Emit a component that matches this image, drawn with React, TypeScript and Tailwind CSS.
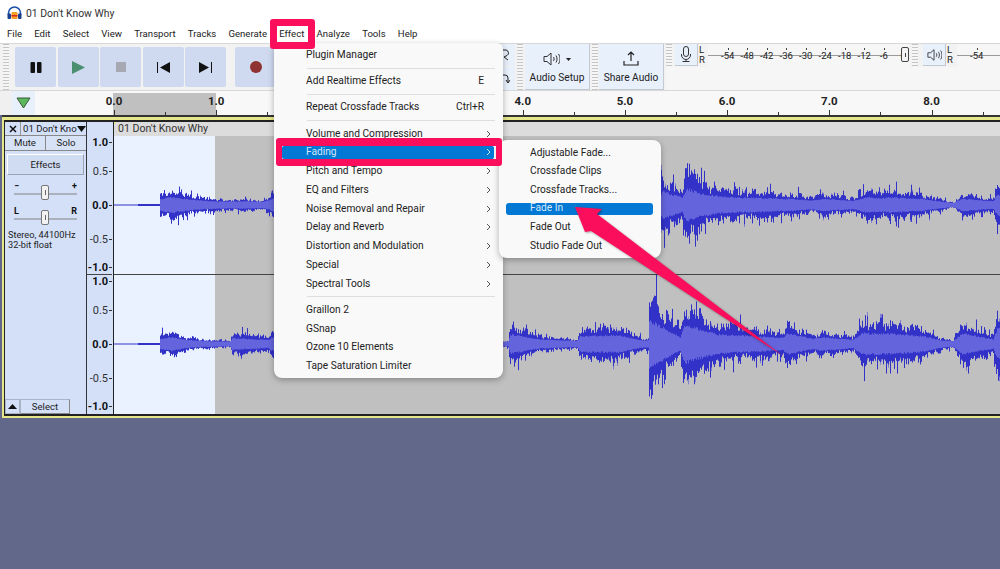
import React from "react";

const font = "font-['Roboto','Noto_Sans',sans-serif]";

type Pt = [number, number];

const topEnv: Pt[] = [[114,0],[137,0],[138,1],[159,1],[160,14],[172,20],[180,16],[195,11],[215,8],[231,7],[240,8],[262,6],[268,10],[275,18],[503,3],[510,20],[660,20],[662,36],[678,22],[682,18],[686,45],[700,30],[723,20],[760,17],[790,14],[813,10],[822,15],[853,9],[867,20],[880,16],[890,19],[923,14],[940,7],[953,3],[962,15],[975,12],[993,8],[997,28],[1000,28]];
const bottomEnv: Pt[] = [[114,0],[137,0],[138,1],[159,1],[160,12],[172,17],[185,9],[200,6],[230,4],[232,15],[245,12],[268,9],[271,15],[275,18],[503,3],[508,4],[510,25],[540,10],[577,6],[580,20],[617,22],[643,7],[648,8],[649,65],[680,16],[684,52],[717,25],[783,15],[787,27],[813,12],[822,17],[853,9],[862,28],[890,26],[923,20],[940,8],[953,5],[962,27],[975,20],[993,11],[997,40],[1000,40]];

function makeRandom(seed: number) {
	let s = seed;
	return () => {
		s = (s + 0x6d2b79f5) | 0;
		let t = Math.imul(s ^ (s >>> 15), 1 | s);
		t = (t + Math.imul(t ^ (t >>> 7), 61 | t)) ^ t;
		return ((t ^ (t >>> 14)) >>> 0) / 4294967296;
	};
}

function ampAt(env: Pt[], x: number) {
	for (let i = 1; i < env.length; i++) {
		if (x <= env[i][0]) {
			const [x0, y0] = env[i - 1];
			const [x1, y1] = env[i];
			return y0 + ((y1 - y0) * (x - x0)) / (x1 - x0);
		}
	}
	return 0;
}

function buildWave(env: Pt[], seed: number, cy: number) {
	const r = makeRandom(seed);
	let outer = "";
	let inner = "";
	let faint = "";
	let slowUp = 1;
	let slowDown = 1;
	for (let i = 0; i < 886; i += 1) {
		const x = i + 0.5;
		const a = ampAt(env, i + 114);
		if (a <= 1.5) {
			outer += `M${x} ${cy - a / 2 - 0.5}V${cy + a / 2 + 0.5}`;
			continue;
		}
		if (i % 4 === 0) {
			slowUp = 0.7 + 0.3 * r();
			slowDown = 0.7 + 0.3 * r();
		}
		const up = a * slowUp * (0.62 + 0.38 * r()) * (r() < 0.12 ? 1.45 : 1);
		const down = a * slowDown * (0.62 + 0.38 * r()) * (r() < 0.12 ? 1.45 : 1);
		outer += `M${x} ${(cy - up).toFixed(1)}V${(cy + down).toFixed(1)}`;
		if (r() < 0.06) faint += `M${x} ${(cy - up * 1.15).toFixed(1)}V${(cy + down * 1.15).toFixed(1)}`;
		const rmsUp = a * (0.3 + 0.08 * r()) + 1;
		const rmsDown = a * (0.3 + 0.08 * r()) + 1;
		inner += `M${x} ${(cy - rmsUp).toFixed(1)}V${(cy + rmsDown).toFixed(1)}`;
	}
	return { outer, inner, faint };
}

const topWave = buildWave(topEnv, 11, 69);
const bottomWave = buildWave(bottomEnv, 29, 69);

type WaveData = { outer: string; inner: string; faint: string };

function Wave({ wave }: { wave: WaveData }) {
	return (
		<svg width="886" height="139" className="absolute inset-0">
			<path d={wave.faint} stroke="#8080d0" strokeWidth="1" fill="none" />
			<path d={wave.outer} stroke="#3232c8" strokeWidth="1" fill="none" />
			<path d={wave.inner} stroke="#6464dc" strokeWidth="1" fill="none" />
		</svg>
	);
}

function Grip({ h = "h-full" }: { h?: string }) {
	return (
		<div
			className={`w-[6px] shrink-0 ${h} bg-[repeating-linear-gradient(to_bottom,#c4c4c4_0,#c4c4c4_1px,#f6f6f6_1px,#f6f6f6_3px)]`}
		/>
	);
}

function Transport({ children }: { children: React.ReactNode }) {
	return (
		<div className="w-[41px] h-[40px] bg-[#cfdaf0] rounded-[2px] flex items-center justify-center shrink-0">
			{children}
		</div>
	);
}

const menuBar = ["File", "Edit", "Select", "View", "Transport", "Tracks", "Generate", "Effect", "Analyze", "Tools", "Help"];

type MenuEntry = { label: string; shortcut?: string; sub?: boolean; active?: boolean; sep?: boolean };

const effectMenu: MenuEntry[] = [
	{ label: "Plugin Manager", sep: true },
	{ label: "Add Realtime Effects", shortcut: "E", sep: true },
	{ label: "Repeat Crossfade Tracks", shortcut: "Ctrl+R", sep: true },
	{ label: "Volume and Compression", sub: true },
	{ label: "Fading", sub: true, active: true },
	{ label: "Pitch and Tempo", sub: true },
	{ label: "EQ and Filters", sub: true },
	{ label: "Noise Removal and Repair", sub: true },
	{ label: "Delay and Reverb", sub: true },
	{ label: "Distortion and Modulation", sub: true },
	{ label: "Special", sub: true },
	{ label: "Spectral Tools", sub: true, sep: true },
	{ label: "Graillon 2" },
	{ label: "GSnap" },
	{ label: "Ozone 10 Elements" },
	{ label: "Tape Saturation Limiter" },
];

const fadingMenu = ["Adjustable Fade...", "Crossfade Clips", "Crossfade Tracks...", "Fade In", "Fade Out", "Studio Fade Out"];

function EffectMenu() {
	return (
		<div className="absolute left-[274px] top-[43px] w-[229px] h-[335px] bg-[#f9f9f9] rounded-b-lg rounded-t-md shadow-[0_2px_6px_rgba(0,0,0,0.3)] pt-[2.5px] z-10">
			{effectMenu.map((m) => (
				<React.Fragment key={m.label}>
					<div className="h-[18.75px] flex items-center relative">
						{m.active && <div className="absolute left-[8px] w-[212px] h-[13px] bg-[#0078d4] rounded-[2px]" />}
						<span className={`relative ml-[32px] text-[10.2px] leading-none ${m.active ? "text-[#d5e8f8]" : "text-[#222]"}`}>
							{m.label}
						</span>
						{m.shortcut && (
							<span className="absolute right-[19px] text-[10.2px] leading-none text-[#222]">{m.shortcut}</span>
						)}
						{m.sub && (
							<svg width="5" height="8" viewBox="0 0 5 8" className="absolute right-[12px]">
								<path d="M1 1l3 3-3 3" fill="none" stroke={m.active ? "#d5e8f8" : "#555"} strokeWidth="1" />
							</svg>
						)}
					</div>
					{m.sep && (
						<div className="h-[7.5px] flex items-center">
							<div className="ml-[33px] w-[188px] h-px bg-[#dedede]" />
						</div>
					)}
				</React.Fragment>
			))}
		</div>
	);
}

function FadingMenu() {
	return (
		<div className="absolute left-[499px] top-[140px] w-[162px] h-[118px] bg-[#f9f9f9] rounded-lg shadow-[0_2px_6px_rgba(0,0,0,0.3)] pt-[3.5px] z-10">
			{fadingMenu.map((label) => (
				<div key={label} className="h-[18.6px] flex items-center relative">
					{label === "Fade In" && <div className="absolute left-[7px] w-[147px] h-[12px] bg-[#0078d4] rounded-[3px]" />}
					<span className={`relative ml-[31px] text-[10.2px] leading-none ${label === "Fade In" ? "text-[#d5e8f8]" : "text-[#222]"}`}>
						{label}
					</span>
				</div>
			))}
		</div>
	);
}

function ScaleLabel({ text, bold, cls }: { text: string; bold?: boolean; cls?: string }) {
	return (
		<div className={`h-[12px] flex items-center justify-end gap-[1px] ${cls ?? ""}`}>
			<span className={`text-[11px] leading-none ${bold ? "font-bold text-[#111]" : "text-[#333]"}`}>{text}</span>
			<span className="w-[3px] h-px bg-[#333]" />
		</div>
	);
}

function Scale({ first }: { first: boolean }) {
	return (
		<div className={first ? "h-[138px]" : "h-[139px]"}>
			<ScaleLabel text="1.0" bold />
			<ScaleLabel text="0.5" cls="mt-[17px]" />
			<ScaleLabel text="0.0" bold cls="mt-[22px]" />
			<ScaleLabel text="-0.5" cls="mt-[22px]" />
			<ScaleLabel text="-1.0" bold cls="mt-[16px]" />
		</div>
	);
}

function Slider({ left, right }: { left: string; right: string }) {
	return (
		<div className="relative h-[25px] mx-[9px]">
			<div className="flex justify-between text-[9px] leading-none text-[#111] font-bold">
				<span>{left}</span>
				<span>{right}</span>
			</div>
			<div className="absolute left-0 right-0 top-[11px] h-[2px] bg-[#aab0bc]" />
			<div className="absolute left-[27px] top-[3px] w-[8px] h-[15px] bg-[#f2f2f2] border border-[#777] rounded-[2px] flex items-center justify-center">
				<div className="w-px h-[5px] bg-[#666]" />
			</div>
		</div>
	);
}

function TrackPanel() {
	return (
		<div className="w-[82px] bg-[#d3e0f8] border-r border-[#333] flex flex-col text-[9.6px] text-[#222] shrink-0">
			<div className="flex h-[14px] border-b border-[#888]">
				<div className="w-[16px] bg-[#d3e0f8] border-r border-[#999] flex items-center justify-center">
					<svg width="8" height="8" viewBox="0 0 8 8">
						<path d="M1 1l6 6M7 1l-6 6" stroke="#111" strokeWidth="1.5" />
					</svg>
				</div>
				<div className="flex-1 flex items-center pl-[2px] justify-between pr-[1px] overflow-hidden bg-[#d3e0f8]">
					<span className="leading-none whitespace-nowrap">01 Don't Kno</span>
					<svg width="9" height="6" viewBox="0 0 9 6" className="shrink-0">
						<path d="M0 0h9L4.5 6z" fill="#111" />
					</svg>
				</div>
			</div>
			<div className="flex h-[15px] border-b border-[#888]">
				<div className="w-[41px] border-r border-[#888] bg-[#d7e2f6] flex items-center justify-center leading-none">Mute</div>
				<div className="flex-1 bg-[#d7e2f6] flex items-center justify-center leading-none">Solo</div>
			</div>
			<div className="mx-[2px] mt-[3px] h-[21px] bg-[#d0dcf2] border border-t-white border-l-white border-r-[#9aa4b8] border-b-[#9aa4b8] flex items-center justify-center leading-none">
				Effects
			</div>
			<div className="mt-[7px]">
				<Slider left="−" right="+" />
			</div>
			<Slider left="L" right="R" />
			<div className="-mt-[2px] ml-[3px] leading-[10px] text-[9.2px] whitespace-nowrap">
				Stereo, 44100Hz
				<br />
				32-bit float
			</div>
			<div className="mt-auto flex h-[15px]">
				<div className="w-[15px] bg-[#d3e0f8] border border-[#aab4c8] flex items-center justify-center">
					<svg width="9" height="5" viewBox="0 0 9 5">
						<path d="M0 5h9L4.5 0z" fill="#111" />
					</svg>
				</div>
				<div className="w-[50px] bg-[#d3e0f8] border border-[#aab4c8] border-r-[#888] border-b-[#888] flex items-center justify-center leading-none">Select</div>
			</div>
		</div>
	);
}

function Channel({ wave, divider }: { wave: WaveData; divider?: boolean }) {
	return (
		<div className={`relative h-[139px] flex ${divider ? "border-b border-[#444]" : ""}`}>
			<div className="w-[101px] bg-[#eaf1ff]" />
			<div className="flex-1 bg-[#c0c0c0]" />
			<Wave wave={wave} />
		</div>
	);
}

function Meter({ w, labels, thumb }: { w: string; labels: string[]; thumb?: boolean }) {
	return (
		<div className={`relative ${w} h-[23px] bg-[#f6f6f6] shrink-0`}>
			<div className="absolute left-0 right-0 top-[11px] h-px bg-[#9a9a9a]" />
			<div className="absolute left-[10px] top-[6px] flex">
				{labels.map((l) => (
					<span key={l} className="relative w-[19.5px] text-center text-[9.5px] leading-[12px] text-[#222]">
						{l}
						<span className="absolute left-1/2 -top-[2px] w-px h-[2px] bg-[#444]" />
					</span>
				))}
			</div>
			{thumb && (
				<div className="absolute left-[193px] top-[3px] w-[8px] h-[15px] bg-[#f4f4f4] border border-[#444] rounded-[2px] flex items-center justify-center">
					<div className="w-px h-[4px] bg-[#444]" />
				</div>
			)}
		</div>
	);
}

function MicIcon() {
	return (
		<svg width="12" height="17" viewBox="0 0 12 17" fill="none" stroke="#333" strokeWidth="1">
			<rect x="3.5" y="0.5" width="5" height="10" rx="2.5" />
			<path d="M1.5 8v1a4.5 4.5 0 0 0 9 0V8M6 13.5V15M2.5 15.5h7" />
		</svg>
	);
}

function SpeakerIcon({ w = 17 }: { w?: number }) {
	return (
		<svg width={w} height="14" viewBox="0 0 17 14" fill="none" stroke="#333" strokeWidth="1">
			<path d="M1 4.5h3L8 1v12L4 9.5H1z" />
			<path d="M10.5 5c.8 1.2.8 2.8 0 4M13 3.5c1.4 2.2 1.4 4.8 0 7M15.5 2c2 3 2 7 0 10" />
		</svg>
	);
}

function Toolbar() {
	return (
		<div className="h-[48px] flex bg-[#f2f2f2] border-t border-b border-[#d8d8d8] shrink-0">
			<div className="w-[3px]" />
			<Grip />
			<div className="w-[6px]" />
			<div className="flex gap-[1.5px] pt-[3px]">
				<Transport>
					<svg width="12" height="11" viewBox="0 0 12 11"><rect x="0.5" width="4.5" height="11" rx="1" fill="#111" /><rect x="7" width="4.5" height="11" rx="1" fill="#111" /></svg>
				</Transport>
				<Transport>
					<svg width="13" height="13" viewBox="0 0 13 13"><path d="M0 0l13 6.5L0 13z" fill="#4a8f6f" /></svg>
				</Transport>
				<Transport>
					<div className="w-[10px] h-[10px] bg-[#a6a9b2]" />
				</Transport>
				<Transport>
					<svg width="13" height="11" viewBox="0 0 13 11"><path d="M0 0h1v11H0zM13 0v11L3 5.5z" fill="#111" /></svg>
				</Transport>
				<Transport>
					<svg width="13" height="11" viewBox="0 0 13 11"><path d="M12 0h1v11h-1zM0 0v11l10-5.5z" fill="#111" /></svg>
				</Transport>
				<div className="w-[6px]" />
				<Transport>
					<div className="w-[12px] h-[12px] rounded-full bg-[#8f3232]" />
				</Transport>
			</div>
			<div className="w-[226px] shrink-0" />
			<div className="w-[13px] flex flex-col gap-[1px] shrink-0">
				<div className="h-[22px] bg-[#e8f0fc] flex items-center">
					<svg width="8" height="12" viewBox="0 0 8 12" fill="none" stroke="#222" strokeWidth="1"><path d="M1 1h3a3 3 0 0 1 1 5.5L2 8l4 3" /></svg>
				</div>
				<div className="h-[23px] bg-[#e8f0fc] flex items-center">
					<svg width="8" height="10" viewBox="0 0 8 10" fill="none" stroke="#222" strokeWidth="1"><path d="M0 1h3a3 3 0 0 1 3 3v4M4 6l2 3 2-3" /></svg>
				</div>
			</div>
			<div className="w-[2px]" />
			<Grip />
			<div className="w-[2px]" />
			<div className="w-[65px] bg-[#e8f0fc] border-r border-b border-[#c4c8d0] flex flex-col items-center pt-[7px] shrink-0">
				<div className="flex items-center gap-[6px] h-[16px]">
					<SpeakerIcon />
					<svg width="5" height="3" viewBox="0 0 5 3"><path d="M0 0h5L2.5 3z" fill="#222" /></svg>
				</div>
				<span className="mt-[6px] text-[10.2px] leading-none text-[#222] whitespace-nowrap">Audio Setup</span>
			</div>
			<div className="w-[2px]" />
			<Grip />
			<div className="w-[1px]" />
			<div className="w-[65px] bg-[#e8f0fc] border-r border-b border-[#c4c8d0] flex flex-col items-center pt-[7px] shrink-0">
				<svg width="16" height="16" viewBox="0 0 16 16" fill="none" stroke="#222" strokeWidth="1.2"><path d="M8 10V1M5 4l3-3 3 3M1 10v4h14v-4" /></svg>
				<span className="mt-[6px] text-[10.2px] leading-none text-[#222] whitespace-nowrap">Share Audio</span>
			</div>
			<div className="w-[2px]" />
			<div className="flex-1 flex flex-col overflow-hidden">
				<div className="h-[23px] flex items-start shrink-0">
					<Grip />
					<div className="w-[3px] shrink-0" />
					<div className="w-[23px] h-[22px] bg-[#e8f0fc] border-r border-b border-[#c4c8d0] flex items-center justify-center shrink-0"><MicIcon /></div>
					<div className="w-[9px] text-[9.5px] leading-[10px] text-[#222] pl-[1px] pt-[1px] shrink-0">L<br />R</div>
					<div className="w-[1px] shrink-0" />
					<Meter w="w-[201px]" labels={["-54", "-48", "-42", "-36", "-30", "-24", "-18", "-12", "-6", "0"]} thumb />
					<div className="w-[3px] shrink-0" />
					<Grip />
					<div className="w-[5px] shrink-0" />
					<div className="w-[23px] h-[22px] bg-[#e8f0fc] border-r border-b border-[#c4c8d0] flex items-center justify-center shrink-0"><SpeakerIcon w={15} /></div>
					<div className="w-[9px] text-[9.5px] leading-[10px] text-[#222] pl-[1px] pt-[1px] shrink-0">L<br />R</div>
					<div className="w-[2px] shrink-0" />
					<Meter w="w-[43px]" labels={["-54"]} />
				</div>
				<div className="flex-1 bg-[#f6f6f6]" />
			</div>
		</div>
	);
}

function Ruler() {
	// 2.0 and 3.0 sit under the open menu, so only their ticks are kept
	const nums = ["0.0", "1.0", "", "", "4.0", "5.0", "6.0", "7.0", "8.0"];
	return (
		<div className="h-[24px] flex bg-[#f8f8f8] shrink-0">
			<div className="w-[12px] bg-[#f0f0f0] shrink-0" />
			<div className="w-[23px] bg-[#e8f0fc] flex items-center justify-center shrink-0">
				<svg width="15" height="12" viewBox="0 0 15 12"><path d="M1 1h13L7.5 11z" fill="#5cb85c" stroke="#3a5a3a" strokeWidth="1" /></svg>
			</div>
			<div className="w-[79px] shrink-0" />
			<div className="flex-1 min-w-0 relative flex">
				<div className="absolute -left-[1px] top-[2px] w-[103px] h-[22px] bg-[#c0c0c0]" />
				{nums.map((n, i) => (
					<div key={i} className="relative w-[102.2px] shrink-0 h-full">
						{n && <span className="absolute -left-[14px] w-[28px] text-center top-[5px] text-[11.5px] leading-none font-bold text-[#222]">{n}</span>}
						<span className="absolute left-0 bottom-0 w-px h-[5px] bg-[#333]" />
						<span className="absolute left-[51px] bottom-0 w-px h-[3px] bg-[#333]" />
					</div>
				))}
			</div>
		</div>
	);
}

export default function App() {
	return (
		<div className={`relative w-[1000px] h-[569px] overflow-hidden flex flex-col bg-[#62688a] ${font}`}>
			<div className="h-[22px] bg-white flex items-start pt-[6px] pl-[7px] gap-[4px] shrink-0">
				<svg width="15" height="14" viewBox="0 0 15 14">
					<path d="M1.5 9V7a6 6 0 0 1 12 0v2" fill="none" stroke="#1b4fa8" strokeWidth="1.6" />
					<rect x="0.5" y="7.5" width="3.5" height="5.5" rx="1" fill="#1b3f90" />
					<rect x="11" y="7.5" width="3.5" height="5.5" rx="1" fill="#1b3f90" />
					<rect x="4.5" y="6" width="6" height="7" rx="1" fill="#f4a020" />
					<rect x="4.5" y="9" width="6" height="1.5" fill="#d8262c" />
				</svg>
				<span className="text-[10.4px] mt-[3px] leading-none text-[#333]">01 Don't Know Why</span>
			</div>
			<div className="h-[21px] bg-white flex items-start pt-[7px] pl-[7px] gap-[12.2px] text-[9.6px] text-[#222] shrink-0">
				{menuBar.map((m) => (
					<span key={m} className="leading-none">{m}</span>
				))}
			</div>
			<Toolbar />
			<Ruler />
			<div className="h-[303px] flex shrink-0">
				<div className="w-[2px] bg-[#62688a]" />
				<div className="flex-1 bg-[#e6e68a] border-t-2 border-[#333] pt-[3px] pb-[2px] pl-[2px] flex flex-col">
					<div className="flex-1 border-t-2 border-l border-b-2 border-[#222] flex">
						<TrackPanel />
						<div className="w-[27px] bg-[#d3e0f8] border-r border-[#222] flex flex-col shrink-0 pr-[1px] pt-[14px]">
							<Scale first />
							<div className="h-px bg-[#444]" />
							<Scale first={false} />
						</div>
						<div className="flex-1 flex flex-col overflow-hidden">
							<div className="h-[14px] bg-[#dcdcdc] rounded-tl-[4px] pl-[4px] flex items-center">
								<span className="text-[10.6px] leading-none text-[#333]">01 Don't Know Why</span>
							</div>
							<Channel wave={topWave} divider />
							<Channel wave={bottomWave} />
						</div>
					</div>
				</div>
			</div>
			<div className="flex-1" />

			<EffectMenu />
			<FadingMenu />

			{/* pink call-outs drawn over the screenshot */}
			<div className="absolute left-[270px] top-[19px] w-[45px] h-[30px] border-[7px] border-[#fb0f5c] rounded-[3px] z-20" />
			<div className="absolute left-[276px] top-[138px] w-[226px] h-[28px] border-x-[6px] border-t-[8px] border-b-[7px] border-[#fb0f5c] rounded-[3px] z-20" />
			<svg width="1000" height="569" className="absolute inset-0 z-30 pointer-events-none drop-shadow-[1px_1px_1px_rgba(0,0,0,0.35)]">
				<polygon points="575,207 602,209 597,214 783,356 591,231 585,232" fill="#fb0f5c" />
			</svg>
		</div>
	);
}
